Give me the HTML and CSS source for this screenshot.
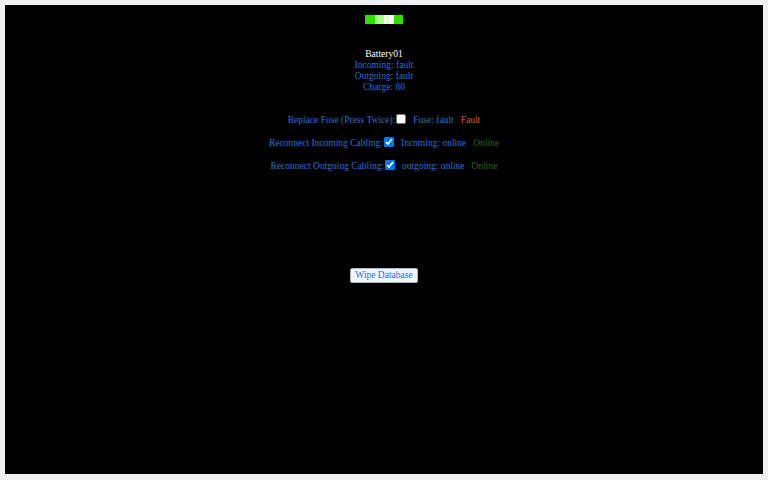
FILE: index.html
```html
<!DOCTYPE html>
<html>
<head>
<meta charset="utf-8">
<link rel="stylesheet" href="styles.css">
</head>
<body>
<div class="screen">
  <div class="battery">
    <span class="seg g"></span><span class="seg lg"></span><span class="seg w"></span><span class="seg g"></span>
  </div>
  <div class="info">
    <div class="name">Battery01</div>
    <div class="blue">Incoming: fault</div>
    <div class="blue">Outgoing: fault</div>
    <div class="blue">Charge: 80</div>
  </div>
  <div class="controls">
    <div class="row">
      <span class="blue">Replace Fuse (Press Twice):</span><input type="checkbox" class="cb">
      <span class="blue st">Fuse: fault</span>
      <span class="fault">Fault</span>
    </div>
    <div class="row">
      <span class="blue">Reconnect Incoming Cabling:</span><input type="checkbox" class="cb" checked>
      <span class="blue st">Incoming: online</span>
      <span class="online">Online</span>
    </div>
    <div class="row">
      <span class="blue">Reconnect Outgoing Cabling:</span><input type="checkbox" class="cb" checked>
      <span class="blue st">outgoing: online</span>
      <span class="online">Online</span>
    </div>
  </div>
  <div class="actions">
    <button class="wipe">Wipe Database</button>
  </div>
</div>
</body>
</html>
```
FILE: styles.css
```css
html, body {
  margin: 0;
  padding: 0;
  background: #f0f0f0;
}
body {
  padding: 5px;
  font-family: "Liberation Serif", "Times New Roman", serif;
  font-size: 9.5px;
}
.screen {
  background: #000;
  width: 758px;
  height: 469px;
  display: flex;
  flex-direction: column;
  align-items: center;
  box-sizing: border-box;
  padding-top: 10px;
}
.battery {
  display: flex;
  width: 38px;
  height: 9px;
}
.seg {
  flex: 1;
}
.seg.g { background: #33dd00; }
.seg.lg { background: #aaff88; }
.seg.w { background: #eeffee; }
.info {
  margin-top: 25px;
  text-align: center;
  line-height: 11px;
}
.name { color: #fff; }
.blue { color: #2a6fdb; }
.controls {
  margin-top: 21px;
  display: flex;
  flex-direction: column;
  align-items: center;
  gap: 10px;
}
.row {
  display: flex;
  align-items: center;
  height: 13px;
  line-height: 13px;
}
.cb {
  margin: 0 0 4px 1px;
  width: 10px;
  height: 10px;
}
.st { margin-left: 7px; }
.fault { color: #e0572c; margin-left: 7px; }
.online { color: #2d6a1a; margin-left: 7px; }
.actions {
  margin-top: 95px;
}
.wipe {
  font-family: "Liberation Serif", "Times New Roman", serif;
  font-size: 9.5px;
  color: #2a6fdb;
  background: #f2f5fc;
  border: 1px solid #b0b4bc;
  border-radius: 2px;
  padding: 1px 4px;
  line-height: 11px;
}
```
